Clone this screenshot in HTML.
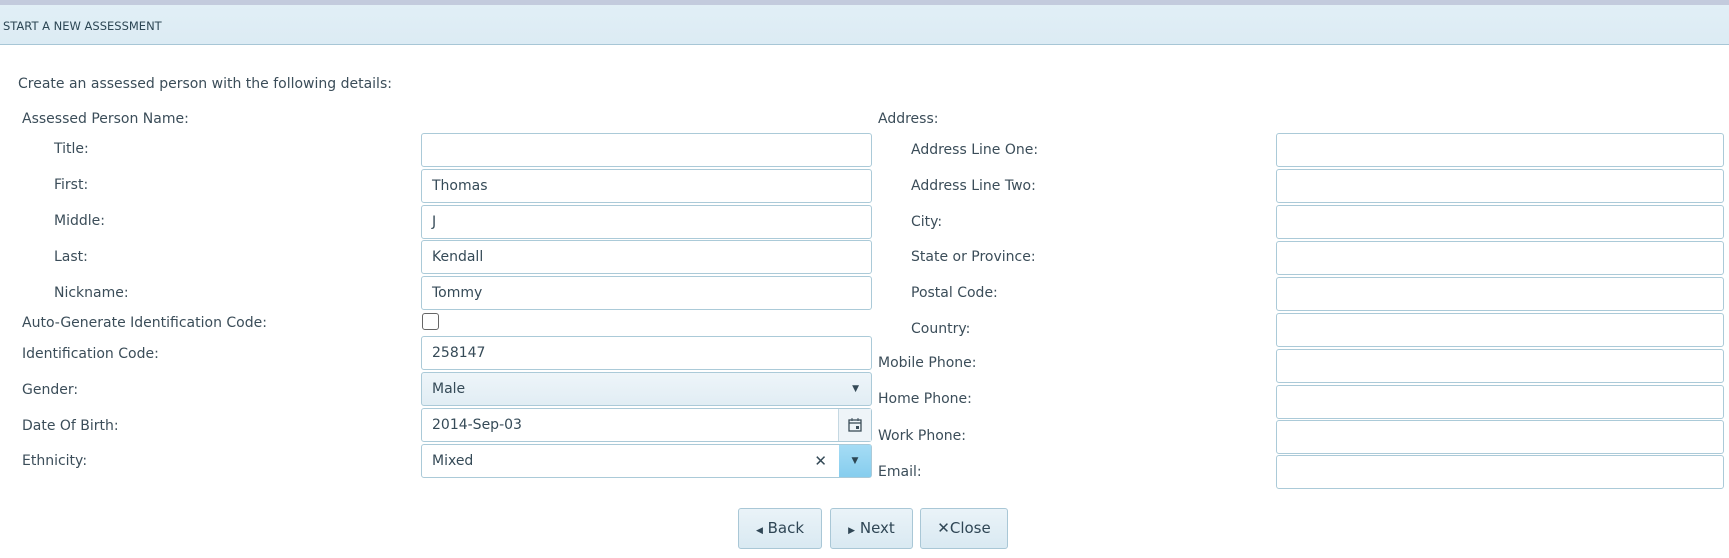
<!DOCTYPE html>
<html><head><style>
body{margin:0;width:1729px;height:558px;background:#fff;font-family:"DejaVu Sans","Liberation Sans",sans-serif;color:#3b4d59;position:relative;overflow:hidden}
.top{position:absolute;left:0;top:0;width:1729px;height:5px;background:#c3cbdd}
.hdr{position:absolute;left:0;top:5px;width:1729px;height:39px;background:linear-gradient(#e1eff6,#dcebf4);border-bottom:1px solid #a7c6d6}
.hdr span{position:absolute;left:3px;top:14px;font-size:11.5px;color:#2c4654}
.t{position:absolute;font-size:14px;white-space:nowrap;line-height:18px}
.in{position:absolute;box-sizing:border-box;border:1px solid #abcad8;border-radius:3px;height:34px;background:#fff;font-size:14px;line-height:32px;padding-left:10px;color:#354a57}
.L{left:421px;width:451px}.R{left:1276px;width:448px}
.btn{position:absolute;top:508px;height:41px;box-sizing:border-box;border:1px solid #a9c7d6;border-radius:3px;background:linear-gradient(#eaf3f8,#d9e9f2);font-size:15px;line-height:39px;text-align:center;color:#2f4655}
</style></head><body>
<div class="top"></div>
<div class="hdr"><span>START A NEW ASSESSMENT</span></div>
<div class="t" style="left:18px;top:75px">Create an assessed person with the following details:</div>
<div class="t" style="left:22px;top:110px">Assessed Person Name:</div>
<div class="t" style="left:54px;top:140px">Title:</div>
<div class="t" style="left:54px;top:176px">First:</div>
<div class="t" style="left:54px;top:212px">Middle:</div>
<div class="t" style="left:54px;top:248px">Last:</div>
<div class="t" style="left:54px;top:284px">Nickname:</div>
<div class="t" style="left:22px;top:314px">Auto-Generate Identification Code:</div>
<div class="t" style="left:22px;top:345px">Identification Code:</div>
<div class="t" style="left:22px;top:381px">Gender:</div>
<div class="t" style="left:22px;top:417px">Date Of Birth:</div>
<div class="t" style="left:22px;top:452px">Ethnicity:</div>

<div class="in L" style="top:133px"></div>
<div class="in L" style="top:169px">Thomas</div>
<div class="in L" style="top:205px">J</div>
<div class="in L" style="top:240px">Kendall</div>
<div class="in L" style="top:276px">Tommy</div>
<div style="position:absolute;left:422px;top:313px;width:17px;height:17px;box-sizing:border-box;border:1px solid #666;border-radius:3px"></div>
<div class="in L" style="top:336px">258147</div>
<div class="in L" style="top:372px;background:linear-gradient(#eef5f9,#e1edf4)">Male<span style="position:absolute;right:12px;top:0;font-size:9px">▼</span></div>
<div class="in L" style="top:408px">2014-Sep-03<div style="position:absolute;right:0;top:0;width:32px;height:32px;background:#eef4f8;border-left:1px solid #c5d8e2">
<svg width="14" height="14" viewBox="0 0 14 14" style="position:absolute;left:9px;top:9px"><rect x="1" y="2" width="12" height="11" fill="none" stroke="#3b4d59" stroke-width="1.3"/><line x1="1" y1="5" x2="13" y2="5" stroke="#3b4d59" stroke-width="1.3"/><line x1="4" y1="0" x2="4" y2="3" stroke="#3b4d59"/><line x1="10" y1="0" x2="10" y2="3" stroke="#3b4d59"/><rect x="8" y="8" width="3" height="3" fill="#3b4d59"/></svg></div></div>
<div class="in L" style="top:444px">Mixed<span style="position:absolute;right:44px;top:0;font-size:15px">✕</span><div style="position:absolute;right:0;top:0;width:32px;height:32px;background:linear-gradient(#a5dcf5,#86cdee);text-align:center;font-size:9px;color:#2c4654">▼</div></div>

<div class="t" style="left:878px;top:110px">Address:</div>
<div class="t" style="left:911px;top:141px">Address Line One:</div>
<div class="t" style="left:911px;top:177px">Address Line Two:</div>
<div class="t" style="left:911px;top:213px">City:</div>
<div class="t" style="left:911px;top:248px">State or Province:</div>
<div class="t" style="left:911px;top:284px">Postal Code:</div>
<div class="t" style="left:911px;top:320px">Country:</div>
<div class="t" style="left:878px;top:354px">Mobile Phone:</div>
<div class="t" style="left:878px;top:390px">Home Phone:</div>
<div class="t" style="left:878px;top:427px">Work Phone:</div>
<div class="t" style="left:878px;top:463px">Email:</div>

<div class="in R" style="top:133px"></div>
<div class="in R" style="top:169px"></div>
<div class="in R" style="top:205px"></div>
<div class="in R" style="top:241px"></div>
<div class="in R" style="top:277px"></div>
<div class="in R" style="top:313px"></div>
<div class="in R" style="top:349px"></div>
<div class="in R" style="top:385px"></div>
<div class="in R" style="top:420px"></div>
<div class="in R" style="top:455px"></div>

<div class="btn" style="left:738px;width:84px"><span style="font-size:9px">◀</span> Back</div>
<div class="btn" style="left:830px;width:83px"><span style="font-size:9px">▶</span> Next</div>
<div class="btn" style="left:920px;width:88px">✕Close</div>
</body></html>
